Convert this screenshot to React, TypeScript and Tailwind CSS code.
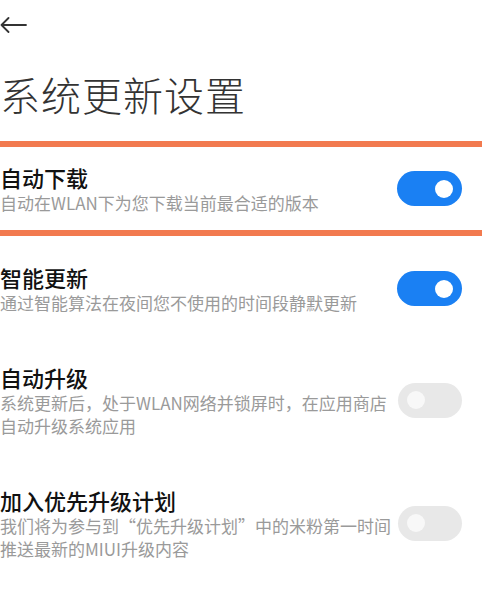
import React from "react";

type Item = {
  title: string;
  desc: React.ReactNode;
  on: boolean;
  marked?: boolean;
};

const items: Item[] = [
  { title: "自动下载", desc: "自动在WLAN下为您下载当前最合适的版本", on: true, marked: true },
  { title: "智能更新", desc: "通过智能算法在夜间您不使用的时间段静默更新", on: true },
  {
    title: "自动升级",
    desc: (
      <>
        系统更新后，处于WLAN网络并锁屏时，在应用商店
        <br />
        自动升级系统应用
      </>
    ),
    on: false,
  },
  {
    title: "加入优先升级计划",
    desc: (
      <>
        我们将为参与到“优先升级计划”中的米粉第一时间
        <br />
        推送最新的MIUI升级内容
      </>
    ),
    on: false,
  },
];

function Toggle({ on }: { on: boolean }) {
  return (
    <div
      className={
        on
          ? "flex h-[35px] w-[65px] shrink-0 items-center justify-end rounded-full bg-[#1a80f3] px-[9px]"
          : "flex h-[35px] w-[64px] shrink-0 items-center justify-start rounded-full bg-[#e8e8e8] px-[9px]"
      }
    >
      <div className={on ? "h-[18px] w-[18px] rounded-full bg-white" : "h-[18px] w-[18px] rounded-full bg-[#f8f8f8]"} />
    </div>
  );
}

export default function App() {
  return (
    <div className="min-h-[606px] w-full bg-white font-['Noto_Sans_CJK_SC','Noto_Sans',sans-serif]">
      <div className="flex h-[50px] items-center">
        <svg width="27" height="16" viewBox="0 0 27 16">
          <path d="M26 8H1.5M8.5 1L1.5 8l7 7" fill="none" stroke="#333" strokeWidth="1.8" strokeLinecap="round" strokeLinejoin="round" />
        </svg>
      </div>
      <h1 className="mt-[20px] text-[40px] font-light leading-[48px] tracking-[1px] text-[#333]">
        系统更新设置
      </h1>
      <div className="mt-[20px]">
        {items.map((it) => (
          <div key={it.title} className="relative flex items-center pb-[24px] pt-[25px] pr-[20px]">
            <div className="flex-1">
              <div className="text-[22px] font-medium leading-[28px] text-[#111]">{it.title}</div>
              <div className="text-[17px] leading-[23px] text-[#9a9a9a]">{it.desc}</div>
            </div>
            <Toggle on={it.on} />
            {it.marked && (
              <div className="pointer-events-none absolute inset-x-0 bottom-[2px] top-[3px] border-y-[6px] border-[#f27a4f]" />
            )}
          </div>
        ))}
      </div>
    </div>
  );
}
